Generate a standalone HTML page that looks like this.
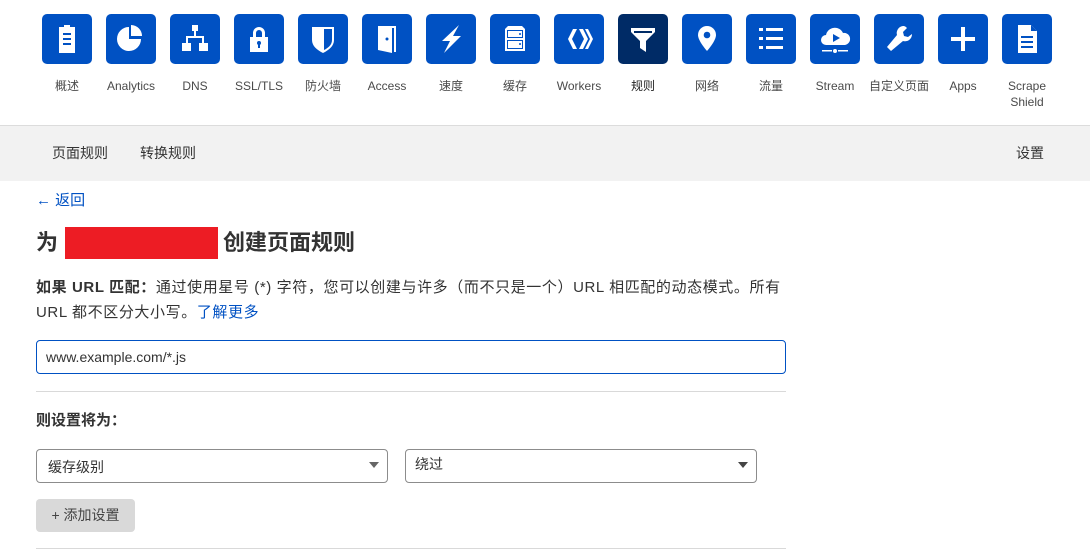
<!DOCTYPE html>
<html><head><meta charset="utf-8"><style>
*{margin:0;padding:0;box-sizing:border-box}
body{width:1090px;height:559px;overflow:hidden;background:#fff;font-family:"Liberation Sans","Noto Sans CJK SC",sans-serif;color:#333;position:relative}
.t{position:absolute;top:14px;width:50px;height:50px;border-radius:5px;background:#0051c3}
.t svg{width:50px;height:50px;display:block}
.l{position:absolute;top:78px;width:70px;text-align:center;font-size:12px;line-height:16px;color:#4a4a4a}
.a{position:absolute}
</style></head><body>
<div class="t" style="left:42px"><svg viewBox="0 0 50 50" fill="#fff"><path d="M17 13h5v-2h6v2h5v26H17z" /><rect x="21" y="19" width="8" height="2" fill="#0051c3"/><rect x="21" y="24" width="8" height="2" fill="#0051c3"/><rect x="21" y="29" width="8" height="2" fill="#0051c3"/></svg></div>
<div class="t" style="left:106px"><svg viewBox="0 0 50 50" fill="#fff"><path d="M23 13a12 12 0 1 0 12 12H23z"/><path d="M25 11a11 11 0 0 1 11 11H25z"/></svg></div>
<div class="t" style="left:170px"><svg viewBox="0 0 50 50" fill="#fff"><rect x="22" y="11" width="6" height="6"/><rect x="24" y="17" width="2" height="6"/><rect x="16" y="22" width="18" height="2"/><rect x="16" y="22" width="2" height="8"/><rect x="32" y="22" width="2" height="8"/><rect x="12" y="29" width="9" height="8"/><rect x="29" y="29" width="9" height="8"/></svg></div>
<div class="t" style="left:234px"><svg viewBox="0 0 50 50" fill="#fff"><path d="M19 23v-4a6 6 0 0 1 12 0v4h-3v-4a3 3 0 0 0-6 0v4z"/><path d="M16 23h18v15H16z"/><circle cx="25" cy="29" r="2" fill="#0051c3"/><rect x="24" y="29" width="2" height="5" fill="#0051c3"/></svg></div>
<div class="t" style="left:298px"><svg viewBox="0 0 50 50" fill="#fff"><path d="M14 13h22v13c0 6-5 10-11 13c-6-3-11-7-11-13z"/><path d="M26 15h8v11c0 5-4 8-8 10z" fill="#0051c3"/></svg></div>
<div class="t" style="left:362px"><svg viewBox="0 0 50 50" fill="#fff"><path d="M16 12h18v26h-2V14h-2v25l-14-3z"/><circle cx="25" cy="25" r="1.5" fill="#0051c3"/></svg></div>
<div class="t" style="left:426px"><svg viewBox="0 0 50 50" fill="#fff"><path d="M33 11L16 27h8l-6 12 17-17h-8z"/></svg></div>
<div class="t" style="left:490px"><svg viewBox="0 0 50 50" fill="#fff"><path d="M15 15l3-3h14l3 3v22H15z"/><rect x="17" y="16" width="16" height="8" fill="#0051c3"/><rect x="17" y="26" width="16" height="9" fill="#0051c3"/><rect x="18" y="17" width="14" height="6"/><rect x="18" y="27" width="14" height="7"/><circle cx="30" cy="20" r="1" fill="#0051c3"/><circle cx="30" cy="30" r="1" fill="#0051c3"/></svg></div>
<div class="t" style="left:554px"><svg viewBox="0 0 50 50" fill="#fff"><path d="M19 15h4l-5 10 5 10h-4l-5-10z"/><path d="M25 15h4l5 10-5 10h-4l5-10z"/><path d="M31 15h3l5 10-5 10h-3l5-10z"/></svg></div>
<div class="t" style="left:618px;background:#002b66"><svg viewBox="0 0 50 50" fill="#fff"><path d="M13 14h24v4l-9 9v11l-6-4v-7l-9-9z"/><rect x="16" y="17" width="18" height="2" fill="#002b66"/></svg></div>
<div class="t" style="left:682px"><svg viewBox="0 0 50 50" fill="#fff"><path d="M25 12a9 9 0 0 1 9 9c0 6-9 16-9 16s-9-10-9-16a9 9 0 0 1 9-9z"/><circle cx="25" cy="21" r="3.3" fill="#0051c3"/></svg></div>
<div class="t" style="left:746px"><svg viewBox="0 0 50 50" fill="#fff"><rect x="13" y="14" width="4" height="3"/><rect x="20" y="14" width="17" height="3"/><rect x="13" y="23" width="4" height="3"/><rect x="20" y="23" width="17" height="3"/><rect x="13" y="32" width="4" height="3"/><rect x="20" y="32" width="17" height="3"/></svg></div>
<div class="t" style="left:810px"><svg viewBox="0 0 50 50" fill="#fff"><path d="M16 31a5 5 0 0 1 0-10a9 9 0 0 1 17-2a6 6 0 0 1 2 12z"/><path d="M23 20l7 4-7 4z" fill="#0051c3"/><rect x="12" y="36" width="10" height="1.5"/><rect x="28" y="36" width="10" height="1.5"/><circle cx="25" cy="37" r="2"/></svg></div>
<div class="t" style="left:874px"><svg viewBox="0 0 50 50" fill="#fff"><path d="M30 12a7 7 0 0 0-7 9L13 33l4 4 12-10a7 7 0 0 0 9-7l-4 3-4-1-1-4 4-4a7 7 0 0 0-3-2z"/></svg></div>
<div class="t" style="left:938px"><svg viewBox="0 0 50 50" fill="#fff"><rect x="23" y="13" width="4" height="24"/><rect x="13" y="23" width="24" height="4"/></svg></div>
<div class="t" style="left:1002px"><svg viewBox="0 0 50 50" fill="#fff"><path d="M16 11h13l6 6v22H16z"/><path d="M29 11v6h6z" fill="#0051c3"/><rect x="19" y="22" width="12" height="2" fill="#0051c3"/><rect x="19" y="27" width="12" height="2" fill="#0051c3"/><rect x="19" y="32" width="12" height="2" fill="#0051c3"/></svg></div>
<div class="l" style="left:32px">概述</div>
<div class="l" style="left:96px">Analytics</div>
<div class="l" style="left:160px">DNS</div>
<div class="l" style="left:224px">SSL/TLS</div>
<div class="l" style="left:288px">防火墙</div>
<div class="l" style="left:352px">Access</div>
<div class="l" style="left:416px">速度</div>
<div class="l" style="left:480px">缓存</div>
<div class="l" style="left:544px">Workers</div>
<div class="l" style="left:608px;color:#222">规则</div>
<div class="l" style="left:672px">网络</div>
<div class="l" style="left:736px">流量</div>
<div class="l" style="left:800px">Stream</div>
<div class="l" style="left:862px;width:74px">自定义页面</div>
<div class="l" style="left:928px">Apps</div>
<div class="l" style="left:992px">Scrape<br>Shield</div>
<div class="a" style="left:0;top:125px;width:1090px;height:56px;background:#f2f2f2;border-top:1px solid #dcdcdc"></div>
<div class="a" style="left:52px;top:144px;font-size:14px;line-height:18px;color:#333">页面规则</div>
<div class="a" style="left:140px;top:144px;font-size:14px;line-height:18px;color:#333">转换规则</div>
<div class="a" style="left:1016px;top:144px;font-size:14px;line-height:18px;color:#333">设置</div>
<div class="a" style="left:36px;top:192px;font-size:15px;line-height:18px;color:#0051c3">← 返回</div>
<div class="a" style="left:36px;top:229px;font-size:22px;line-height:28px;font-weight:bold;color:#333">为</div>
<div class="a" style="left:65px;top:227px;width:153px;height:32px;background:#ed1c24"></div>
<div class="a" style="left:223px;top:229px;font-size:22px;line-height:28px;font-weight:bold;color:#333">创建页面规则</div>
<div class="a" style="left:36px;top:275px;width:790px;white-space:nowrap;font-size:15px;line-height:25px;color:#333;letter-spacing:0.6px"><b>如果 URL 匹配：</b>通过使用星号 (*) 字符，您可以创建与许多（而不只是一个）URL 相匹配的动态模式。所有<br>URL 都不区分大小写。<span style="color:#0051c3">了解更多</span></div>
<div class="a" style="left:36px;top:340px;width:750px;height:34px;border:1px solid #0051c3;border-radius:4px;font-size:14px;line-height:32px;padding-left:9px;color:#333">www.example.com/*.js</div>
<div class="a" style="left:36px;top:391px;width:750px;height:1px;background:#d9d9d9"></div>
<div class="a" style="left:36px;top:411px;font-size:15px;line-height:20px;font-weight:bold;color:#333">则设置将为：</div>
<div class="a" style="left:36px;top:449px;width:352px;height:34px;border:1px solid #8c8c8c;border-radius:4px;font-size:14px;line-height:34px;padding-left:11px;color:#333">缓存级别<span style="position:absolute;right:8px;top:12px;border-left:5px solid transparent;border-right:5px solid transparent;border-top:6px solid #666"></span></div>
<div class="a" style="left:405px;top:449px;width:352px;height:34px;border:1px solid #8c8c8c;border-radius:4px;font-size:14px;line-height:28px;padding-left:9px;color:#333">绕过<span style="position:absolute;right:8px;top:12px;border-left:5px solid transparent;border-right:5px solid transparent;border-top:6px solid #444"></span></div>
<div class="a" style="left:36px;top:499px;width:99px;height:33px;background:#d9d9d9;border-radius:4px;font-size:14px;line-height:33px;text-align:center;color:#444">+ 添加设置</div>
<div class="a" style="left:36px;top:548px;width:750px;height:1px;background:#d9d9d9"></div>
</body></html>
